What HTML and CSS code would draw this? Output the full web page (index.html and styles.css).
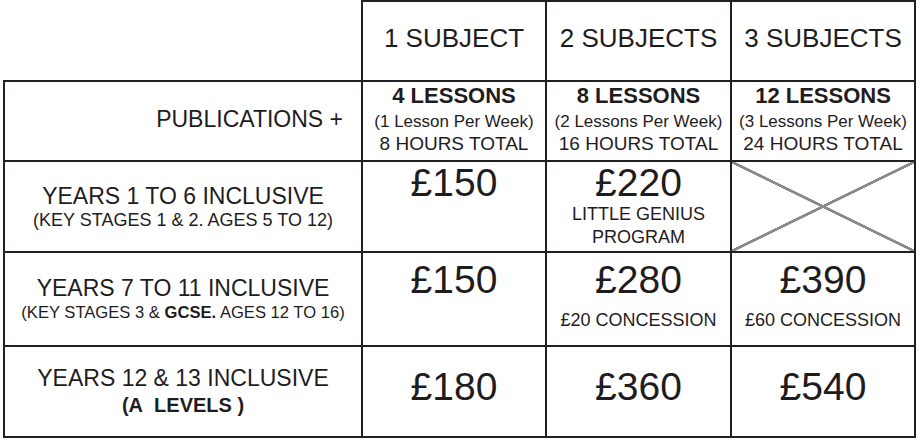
FILE: index.html
```html
<!DOCTYPE html>
<html lang="en">
<head>
<meta charset="utf-8">
<title>Tuition fees</title>
<link rel="stylesheet" href="styles.css">
</head>
<body>
<div class="fees">
  <div class="cell corner"></div>
  <div class="cell head">1 SUBJECT</div>
  <div class="cell head">2 SUBJECTS</div>
  <div class="cell head">3 SUBJECTS</div>

  <div class="cell first pub">PUBLICATIONS +</div>
  <div class="cell lessons">
    <div class="l-count">4 LESSONS</div>
    <div class="l-rate">(1 Lesson Per Week)</div>
    <div class="l-total">8 HOURS TOTAL</div>
  </div>
  <div class="cell lessons">
    <div class="l-count">8 LESSONS</div>
    <div class="l-rate">(2 Lessons Per Week)</div>
    <div class="l-total">16 HOURS TOTAL</div>
  </div>
  <div class="cell lessons">
    <div class="l-count">12 LESSONS</div>
    <div class="l-rate">(3 Lessons Per Week)</div>
    <div class="l-total">24 HOURS TOTAL</div>
  </div>

  <div class="cell first label">
    <div class="yr">YEARS 1 TO 6 INCLUSIVE</div>
    <div class="ks">(KEY STAGES 1 &amp; 2. AGES 5 TO 12)</div>
  </div>
  <div class="cell fee fee-r3"><div class="price">£150</div></div>
  <div class="cell fee fee-r3">
    <div class="price">£220</div>
    <div class="note">LITTLE GENIUS</div>
    <div class="note">PROGRAM</div>
  </div>
  <div class="cell na"></div>

  <div class="cell first label">
    <div class="yr">YEARS 7 TO 11 INCLUSIVE</div>
    <div class="ks ks-small">(KEY STAGES 3 &amp; <b>GCSE.</b> AGES 12 TO 16)</div>
  </div>
  <div class="cell fee fee-r4"><div class="price">£150</div></div>
  <div class="cell fee fee-r4">
    <div class="price">£280</div>
    <div class="note">£20 CONCESSION</div>
  </div>
  <div class="cell fee fee-r4">
    <div class="price">£390</div>
    <div class="note">£60 CONCESSION</div>
  </div>

  <div class="cell first label">
    <div class="yr">YEARS 12 &amp; 13 INCLUSIVE</div>
    <div class="ks ks-bold">(A&nbsp; LEVELS )</div>
  </div>
  <div class="cell fee fee-r5"><div class="price">£180</div></div>
  <div class="cell fee fee-r5"><div class="price">£360</div></div>
  <div class="cell fee fee-r5"><div class="price">£540</div></div>
</div>
</body>
</html>
```

FILE: styles.css
```css
html, body {
  margin: 0;
  padding: 0;
  background: #ffffff;
}

.fees {
  display: grid;
  grid-template-columns: 360px 184px 185px 184px;
  grid-template-rows: 82px 80px 91px 94px 91px;
  margin-left: 3px;
  color: #1f1c1d;
  font-family: "Liberation Sans", Arial, sans-serif;
}

.cell {
  box-sizing: border-box;
  border-right: 2px solid #231f20;
  border-bottom: 2px solid #231f20;
  display: flex;
  flex-direction: column;
  align-items: center;
  justify-content: center;
  text-align: center;
  white-space: nowrap;
}

.first {
  border-left: 2px solid #231f20;
}

.corner {
  border-right: 2px solid #231f20;
}

.head {
  border-top: 2px solid #231f20;
  font-size: 26px;
  padding-bottom: 5px;
}

.pub {
  align-items: flex-end;
  padding-right: 18px;
  padding-bottom: 4px;
  font-size: 23px;
}

.lessons {
  padding-bottom: 7px;
}

.l-count {
  font-weight: bold;
  font-size: 22px;
  line-height: 31px;
}

.l-rate {
  font-size: 17px;
  line-height: 22px;
}

.l-total {
  font-size: 19px;
  line-height: 22px;
}

.label .yr {
  font-size: 23px;
  line-height: 26px;
}

.label .ks {
  font-size: 18px;
  line-height: 22px;
}

.label .ks-small {
  font-size: 16.6px;
  line-height: 23px;
}

.label .ks-bold {
  font-weight: bold;
  font-size: 20px;
  line-height: 28px;
}

.price {
  font-size: 39px;
  line-height: 40px;
}

.note {
  font-size: 18px;
  line-height: 23px;
}

.fee-r3 {
  justify-content: flex-start;
  padding-top: 1px;
}

.fee-r4 {
  justify-content: flex-start;
  padding-top: 7px;
}

.fee-r4 .note {
  margin-top: 9px;
}

.fee-r5 {
  padding-bottom: 10px;
}

.na {
  background-repeat: no-repeat;
  background-image:
    linear-gradient(to top right, transparent calc(50% - 1.6px), #8a8a8a calc(50% - 1.2px), #8a8a8a calc(50% + 1.2px), transparent calc(50% + 1.6px)),
    linear-gradient(to bottom right, transparent calc(50% - 1.6px), #8a8a8a calc(50% - 1.2px), #8a8a8a calc(50% + 1.2px), transparent calc(50% + 1.6px));
}
```
